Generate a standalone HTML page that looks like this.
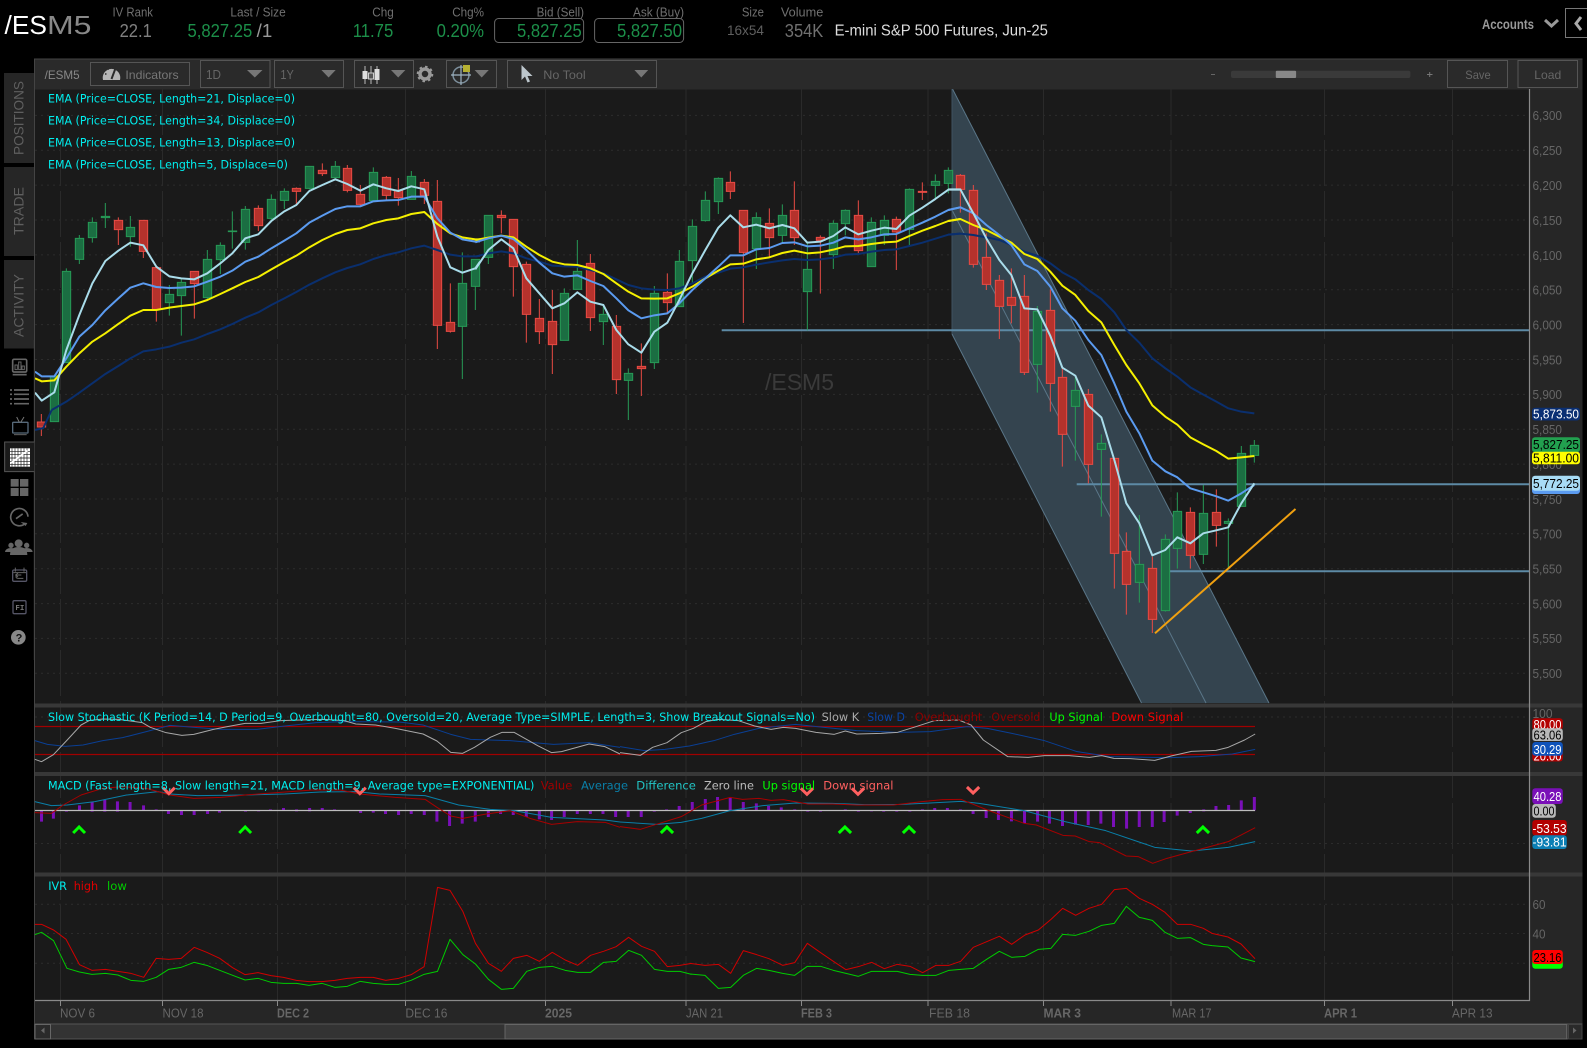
<!DOCTYPE html>
<html><head><meta charset="utf-8"><title>/ESM5</title>
<style>
html,body{margin:0;padding:0;background:#000;width:1587px;height:1048px;overflow:hidden}
svg{display:block;font-family:"Liberation Sans",sans-serif}
text{white-space:pre}
.g{fill:none;stroke:#279a56;stroke-width:3}
.gb{fill:#1b6e42;stroke:#279a56;stroke-width:3}
.r{fill:#b5322c;stroke:#e84b44;stroke-width:3}
.e5{fill:none;stroke:#a9dcea;stroke-width:6;stroke-linejoin:round}
.e13{fill:none;stroke:#5b9bf0;stroke-width:6;stroke-linejoin:round}
.e21{fill:none;stroke:#f5f000;stroke-width:6;stroke-linejoin:round}
.e34{fill:none;stroke:#0a2f6e;stroke-width:6;stroke-linejoin:round}
.n{vector-effect:non-scaling-stroke;fill:none;stroke-width:1;stroke-linejoin:round}
.ax{fill:#666;font-size:13px}
.hd{fill:#707070;font-size:13px}
.bu{font-size:13px}
.cy{fill:#0ee;font-size:11.5px}
.lg{font-family:"DejaVu Sans",sans-serif;font-size:11.5px}
.ic{fill:none;stroke:#666;stroke-width:5}
</style></head><body>
<svg width="1587" height="1048" viewBox="0 0 1587 1048" xmlns="http://www.w3.org/2000/svg">
<rect width="1587" height="1048" fill="#000"/>

<!-- header -->
<text x="4.5" y="34" font-size="26" fill="#fff" textLength="42.5" lengthAdjust="spacingAndGlyphs">/ES</text>
<text x="47" y="34" font-size="26" fill="#888" textLength="44.5" lengthAdjust="spacingAndGlyphs">M5</text>
<g class="hd">
<text x="112.5" y="16.5" textLength="40.5" lengthAdjust="spacingAndGlyphs">IV Rank</text>
<text x="230.4" y="16.5" textLength="55.3" lengthAdjust="spacingAndGlyphs">Last / Size</text>
<text x="372.3" y="16.5" textLength="21.5" lengthAdjust="spacingAndGlyphs">Chg</text>
<text x="452.2" y="16.5" textLength="31.8" lengthAdjust="spacingAndGlyphs">Chg%</text>
<text x="536.6" y="16.5" textLength="47.4" lengthAdjust="spacingAndGlyphs">Bid (Sell)</text>
<text x="633" y="16.5" textLength="51" lengthAdjust="spacingAndGlyphs">Ask (Buy)</text>
<text x="741.9" y="16.5" textLength="22" lengthAdjust="spacingAndGlyphs">Size</text>
<text x="780.9" y="16.5" textLength="42.4" lengthAdjust="spacingAndGlyphs">Volume</text>
</g>
<g font-size="18">
<text x="119.6" y="37" fill="#808080" textLength="32.2" lengthAdjust="spacingAndGlyphs">22.1</text>
<text x="187.5" y="37" fill="#1c8f49" textLength="64.7" lengthAdjust="spacingAndGlyphs">5,827.25</text>
<text x="256.7" y="37" fill="#999" textLength="15.6" lengthAdjust="spacingAndGlyphs">/1</text>
<text x="352.7" y="37" fill="#1c8f49" textLength="40.6" lengthAdjust="spacingAndGlyphs">11.75</text>
<text x="436.6" y="37" fill="#1c8f49" textLength="47.4" lengthAdjust="spacingAndGlyphs">0.20%</text>
<rect x="494.6" y="18.5" width="89" height="24" rx="4" fill="#000" stroke="#666"/>
<rect x="594.6" y="18.5" width="89" height="24" rx="4" fill="#000" stroke="#666"/>
<text x="517" y="37" fill="#1c8f49" textLength="64.7" lengthAdjust="spacingAndGlyphs">5,827.25</text>
<text x="617" y="37" fill="#1c8f49" textLength="65" lengthAdjust="spacingAndGlyphs">5,827.50</text>
<text x="784.8" y="37" fill="#707070" textLength="38.5" lengthAdjust="spacingAndGlyphs">354K</text>
</g>
<text x="727" y="35" font-size="14" fill="#5f5f5f" textLength="36.9" lengthAdjust="spacingAndGlyphs">16x54</text>
<text x="834.6" y="35.5" font-size="15.5" fill="#ddd" textLength="213.3" lengthAdjust="spacingAndGlyphs">E-mini S&amp;P 500 Futures, Jun-25</text>
<text x="1482" y="29" font-size="14" font-weight="bold" fill="#999" textLength="52" lengthAdjust="spacingAndGlyphs">Accounts</text>
<path d="M1545 20l6.5 6 6.5-6" fill="none" stroke="#999" stroke-width="3"/>
<rect x="1565.5" y="8.5" width="30" height="29" fill="#000" stroke="#777"/>
<path d="M1581 17l-5 6.500 5 6.500" fill="none" stroke="#aaa" stroke-width="3"/>

<!-- left tabs -->
<rect x="4" y="73" width="30" height="90" fill="#262626"/>
<rect x="4" y="167" width="30" height="89" fill="#262626"/>
<rect x="4" y="260" width="30" height="88.500" fill="#262626"/>
<g font-size="14" fill="#5f5f5f">
<text transform="translate(23.500,155) rotate(-90)" textLength="74" lengthAdjust="spacingAndGlyphs">POSITIONS</text>
<text transform="translate(23.500,235) rotate(-90)" textLength="48" lengthAdjust="spacingAndGlyphs">TRADE</text>
<text transform="translate(23.500,337) rotate(-90)" textLength="63" lengthAdjust="spacingAndGlyphs">ACTIVITY</text>
</g>

<!-- window -->
<rect x="34" y="58.500" width="1548.500" height="981" fill="#262626"/>
<rect x="35" y="89" width="1494" height="911" fill="#1a1a1a"/>
<rect x="34" y="59" width="1548.500" height="30.500" fill="#2a2a2a"/>
<path d="M34 59H1582.500" stroke="#444" fill="none"/>
<path d="M34.500 59V1039" stroke="#444" fill="none"/>

<!-- grid -->
<g fill="none" stroke="#2c2c2c" stroke-dasharray="2 4">
<path d="M35 115.400H1529M35 150.300H1529M35 185.100H1529M35 220H1529M35 254.900H1529M35 289.800H1529M35 324.600H1529M35 359.500H1529M35 394.400H1529M35 429.200H1529M35 464.100H1529M35 499H1529M35 533.800H1529M35 568.700H1529M35 603.600H1529M35 638.400H1529M35 673.300H1529"/>
<path d="M35 717H1529M35 843.500H1529M35 904.300H1529M35 933.500H1529M35 963.300H1529"/>
</g>
<g fill="none" stroke="#2a2a2a" stroke-dasharray="46 5">
<path d="M60.500 89V1000M162.500 89V1000M277.500 89V1000M405.500 89V1000M545.500 89V1000M686 89V1000M801.500 89V1000M928 89V1000M1043.500 89V1000M1171 89V1000M1324.500 89V1000M1452.500 89V1000"/>
</g>

<!-- main pane drawing -->
<svg x="35" y="89" width="1494" height="615" viewBox="35 89 1494 615" overflow="hidden">
<polygon points="952,88 1269,703 1141.500,703 952,334" fill="#34444f"/>
<path d="M952 88L1269 703M952 334L1141.500 703M952 210L1206 703" fill="none" stroke="#5a7688" stroke-width="1"/>
<path d="M952 88V334" fill="none" stroke="#3f5260"/>
<path d="M721.700 330.300H1529M1076.700 484.300H1529M1170 571.300H1529" fill="none" stroke="#5d8aa5" stroke-width="2"/>

<!-- z9 candles -->
<g transform="translate(30,150) scale(.33333)">
<path class="gb" d="M61 678h25V815h-25zM109 355V364M97 364h25V638h-25zM148 255V265M148 328V342M136 265h25V328h-25zM187 202V217M187 263V278M175 217h25V263h-25zM226 159V199M226 203V234M214 199h25V203h-25zM301 198V232M301 260V290M289 232h25V260h-25zM418 405V433M418 458V497M406 433h25V458h-25zM454 385V397M454 437V557M442 397h25V437h-25zM532 300V328M532 443V450M520 328h25V443h-25zM571 277V286M571 329V372M559 286h25V329h-25zM607 184V243M607 245V296M595 243h25V245h-25zM646 168V178M646 277V299M634 178h25V277h-25zM724 133V148M724 205V215M712 148h25V205h-25zM763 115V124M763 151V177M751 124h25V151h-25zM838 49V49M838 115V118M826 49h25V115h-25zM916 33V49M916 83V85M904 49h25V83h-25zM1030 52V67M1030 152V155M1018 67h25V152h-25zM1144 63V79M1144 148V149M1132 79h25V148h-25zM1297 307V400M1297 529V687M1285 400h25V529h-25zM1336 328V328M1336 409V480M1324 328h25V409h-25z"/>
<path class="r" d="M34 792V816M34 831V858M22 816h25V831h-25zM265 202V211M265 239V285M253 211h25V239h-25zM340 304V324M328 211h25V304h-25zM379 350V353M379 478V515M367 353h25V478h-25zM493 401V506M481 364h25V401h-25zM685 166V175M685 227V243M673 175h25V227h-25zM799 112V115M799 124V165M787 115h25V124h-25zM877 40V61M877 71V78M865 61h25V71h-25zM952 45V55M952 121V127M940 55h25V121h-25zM991 105V133M991 163V168M979 133h25V163h-25zM1069 78V82M1069 136V150M1057 82h25V136h-25zM1105 84V121M1105 143V167M1093 121h25V143h-25zM1183 87V97M1183 136V162M1171 97h25V136h-25zM1222 90V154M1222 526V597M1210 154h25V526h-25zM1261 400V517M1261 544V548M1249 517h25V544h-25z"/>
</g>
<!-- z10 candles -->
<g transform="translate(470,150) scale(.33333)">
<path class="gb" d="M55 322V342M43 196h25V322h-25zM283 415V430M271 430h25V571h-25zM322 270V364M310 364h25V418h-25zM400 462V493M400 515V585M388 493h25V515h-25zM475 655V670M475 691V810M463 670h25V691h-25zM553 408V430M553 638V657M541 430h25V638h-25zM628 300V334M616 334h25V470h-25zM667 208V229M667 332V400M655 229h25V332h-25zM706 124V151M706 212V215M694 151h25V212h-25zM745 82V85M745 155V192M733 85h25V155h-25zM859 187V203M859 296V357M847 203h25V296h-25zM937 163V196M937 256V280M925 196h25V256h-25zM1012 280V358M1012 425V541M1000 358h25V425h-25zM1090 211V220M1090 314V357M1078 220h25V314h-25zM1126 178V181M1126 221V256M1114 181h25V221h-25zM1204 202V217M1192 217h25V350h-25zM1243 196V211M1243 256V285M1231 211h25V256h-25zM1318 115V118M1318 238V288M1306 118h25V238h-25zM1396 73V94M1396 106V145M1384 94h25V106h-25zM1435 52V61M1435 100V130M1423 61h25V100h-25z"/>
<path class="r" d="M94 181V196M94 203V250M82 196h25V203h-25zM130 350V440M118 208h25V350h-25zM169 335V343M169 493V578M157 343h25V493h-25zM208 447V505M208 545V582M196 505h25V545h-25zM247 420V514M247 584V672M235 514h25V584h-25zM361 312V340M361 503V543M349 340h25V503h-25zM439 495V529M439 689V732M427 529h25V689h-25zM514 580V649M514 656V738M502 649h25V656h-25zM592 370V427M592 458V488M580 427h25V458h-25zM781 64V97M781 124V147M769 97h25V124h-25zM820 307V519M808 181h25V307h-25zM898 175V220M898 263V320M886 220h25V263h-25zM973 94V181M973 263V285M961 181h25V263h-25zM1051 256V262M1051 271V431M1039 262h25V271h-25zM1165 151V196M1165 302V310M1153 196h25V302h-25zM1279 200V208M1279 246V360M1267 208h25V246h-25zM1357 97V124M1357 127V150M1345 124h25V127h-25z"/>
</g>
<!-- z11 candles -->
<g transform="translate(920,150) scale(.33333)">
<path class="gb" d="M352 468V484M352 643V728M340 484h25V643h-25zM466 675V721M466 769V932M454 721h25V769h-25zM544 853V880M544 898V1100M532 880h25V898h-25zM658 1095V1243M658 1297V1358M646 1243h25V1297h-25zM736 1153V1168M736 1382V1385M724 1168h25V1382h-25zM772 1027V1084M772 1195V1256M760 1084h25V1195h-25zM850 1005V1090M850 1213V1242M838 1090h25V1213h-25zM925 1105V1114M925 1120V1254M913 1114h25V1120h-25zM964 888V910M952 910h25V1069h-25zM1003 870V886M1003 916V938M991 886h25V916h-25z"/>
<path class="r" d="M121 72V76M121 118V188M109 76h25V118h-25zM160 105V121M160 343V353M148 121h25V343h-25zM199 250V322M199 403V420M187 322h25V403h-25zM238 375V391M238 469V567M226 391h25V469h-25zM274 355V442M274 466V520M262 442h25V466h-25zM313 375V439M313 667V675M301 439h25V667h-25zM391 418V481M391 700V785M379 481h25V700h-25zM427 655V682M427 853V950M415 682h25V853h-25zM505 717V733M505 943V1000M493 733h25V943h-25zM583 1210V1316M571 925h25V1210h-25zM619 1147V1204M619 1303V1394M607 1204h25V1303h-25zM697 1220V1255M697 1408V1449M685 1255h25V1408h-25zM811 1072V1087M811 1216V1256M799 1087h25V1216h-25zM889 1018V1087M889 1126V1190M877 1087h25V1126h-25z"/>
</g>

<!-- EMAs -->
<g transform="translate(30,150) scale(.33333)">
<polyline class="e34" points="65,780 109,755 148,728 187,700 226,672 265,648 301,625 340,604 379,598 418,590 454,578 493,568 532,552 571,538 607,522 646,503 685,487 724,465 763,445 799,426 838,404 877,385 916,367 952,354 991,343 1030,327 1069,315 1105,307 1144,295 1183,287 1222,300 1261,314 1297,319 1336,319 1350,318"/>
<polyline class="e34" points="15,840 40,834 65,780"/>
<polyline class="e21" points="15,685 35,694 73,691 109,650 148,610 187,575 226,550 265,522 301,497 340,480 379,480 418,473 454,468 493,463 532,450 571,432 607,415 646,396 685,381 724,358 763,336 799,317 838,292 877,270 916,252 952,240 991,235 1030,220 1069,210 1105,205 1144,192 1183,186 1222,222 1261,250 1297,262 1336,268 1350,268"/>
<polyline class="e13" points="15,665 35,679 73,679 109,625 148,560 187,525 226,481 265,445 301,413 340,400 379,411 418,414 454,413 493,409 532,395 571,380 607,362 646,335 685,320 724,295 763,272 799,250 838,218 877,197 916,177 952,169 991,169 1030,154 1069,151 1105,150 1144,140 1183,140 1222,205 1261,248 1297,268 1336,275 1350,274"/>
<polyline class="e5" points="15,728 35,752 73,727 109,600 148,495 187,400 226,333 265,302 301,278 340,286 379,350 418,379 454,385 493,388 532,370 571,340 607,310 646,265 685,253 724,213 763,184 799,165 838,123 877,105 916,88 952,102 991,122 1030,103 1069,115 1105,123 1144,109 1183,118 1222,260 1261,352 1297,368 1336,355 1350,335"/>
</g>
<g transform="translate(470,150) scale(.33333)">
<polyline class="e34" points="16,320 55,310 94,304 130,310 169,325 208,335 247,347 283,349 322,350 361,360 400,370 439,388 475,405 514,415 553,419 592,420 628,415 667,400 706,380 745,368 781,356 820,352 859,344 898,337 937,331 973,327 1012,330 1051,328 1090,323 1126,314 1165,312 1204,305 1243,300 1279,298 1318,288 1357,278 1396,266 1435,254 1471,251"/>
<polyline class="e21" points="16,270 55,263 94,257 130,262 169,290 208,315 247,335 283,343 322,345 361,355 400,372 439,400 475,425 514,445 553,446 592,445 628,430 667,410 706,385 745,362 781,343 820,341 859,328 898,322 937,309 973,302 1012,310 1051,307 1090,299 1126,289 1165,288 1204,282 1243,277 1279,275 1318,258 1357,242 1396,228 1435,213 1471,207"/>
<polyline class="e13" points="16,277 55,265 94,257 130,267 169,300 208,338 247,370 283,380 322,376 361,393 400,408 439,445 475,481 514,505 553,496 592,490 628,460 667,420 706,385 745,350 781,316 820,316 859,298 898,294 937,279 973,277 1012,289 1051,287 1090,278 1126,262 1165,268 1204,262 1243,253 1279,252 1318,235 1357,218 1396,200 1435,180 1471,172"/>
<polyline class="e5" points="16,358 55,300 94,268 130,295 169,385 208,430 247,475 283,460 322,427 361,455 400,465 439,540 475,583 514,608 553,545 592,518 628,450 667,370 706,300 745,233 781,196 820,232 859,224 898,235 937,225 973,235 1012,278 1051,275 1090,258 1126,232 1165,253 1204,242 1243,233 1279,237 1318,197 1357,173 1396,147 1435,119 1471,119"/>
</g>
<g transform="translate(920,150) scale(.33333)">
<polyline class="e34" points="85,254 121,251 160,255 199,262 238,270 274,285 313,305 352,317 391,340 427,367 466,388 505,420 544,447 583,487 619,540 658,578 697,625 736,655 772,680 811,712 850,734 889,755 925,775 964,785 1003,790"/>
<polyline class="e21" points="85,213 121,207 160,225 199,240 238,260 274,278 313,312 352,327 391,365 427,407 466,435 505,483 544,517 583,585 619,645 658,700 697,766 736,800 772,824 811,862 850,883 889,903 925,926 964,922 1003,918"/>
<polyline class="e13" points="85,180 121,172 160,190 199,225 238,255 274,285 313,343 352,363 391,410 427,475 466,512 505,570 544,615 583,700 619,785 658,850 697,932 736,964 772,982 811,1015 850,1027 889,1039 925,1052 964,1030 1003,1005"/>
<polyline class="e5" points="85,118 121,118 160,190 199,265 238,330 274,375 313,475 352,478 391,558 427,653 466,677 505,767 544,802 583,930 619,1060 658,1120 697,1216 736,1200 772,1162 811,1180 850,1150 889,1141 925,1132 964,1060 1003,1000"/>
</g>
<path d="M1155 633.300L1295.500 509" fill="none" stroke="#f0a010" stroke-width="2"/>
<text x="765" y="390" font-size="23" fill="#3a3a3a" textLength="69" lengthAdjust="spacingAndGlyphs">/ESM5</text>
</svg>

<!-- EMA legends -->
<g class="lg" fill="#0ee">
<text x="48" y="102.500" textLength="247" lengthAdjust="spacingAndGlyphs">EMA (Price=CLOSE, Length=21, Displace=0)</text>
<text x="48" y="124.500" textLength="247" lengthAdjust="spacingAndGlyphs">EMA (Price=CLOSE, Length=34, Displace=0)</text>
<text x="48" y="146.500" textLength="247" lengthAdjust="spacingAndGlyphs">EMA (Price=CLOSE, Length=13, Displace=0)</text>
<text x="48" y="168.500" textLength="240" lengthAdjust="spacingAndGlyphs">EMA (Price=CLOSE, Length=5, Displace=0)</text>
</g>

<!-- pane separators -->
<g fill="#383838">
<rect x="35" y="703.500" width="1547.500" height="4"/>
<rect x="35" y="772" width="1547.500" height="4"/>
<rect x="35" y="872.500" width="1547.500" height="4"/>
</g>

<!-- stoch -->
<path d="M35 726.500H1255M35 754.500H1255" stroke="#a00000" fill="none" stroke-width="1.200"/>
<g transform="translate(0,690) scale(.3954,.33333)">
<polyline class="n" stroke="#0a3f94" points="88,152 120,163 165,169 210,165 260,152 310,143 370,125 430,106 500,113 560,118 650,118 720,108 800,98 870,95 1010,96 1070,105 1140,133 1190,148 1290,152 1400,163 1490,158 1568,172"/>
<polyline class="n" stroke="#a8a8a8" points="88,208 105,215 135,194 170,150 205,105 225,92 260,87 300,88 360,98 380,112 420,128 460,136 490,133 540,118 575,110 620,100 660,100 710,92 760,90 820,88 870,92 900,102 950,105 1000,115 1070,132 1105,153 1140,187 1170,190 1200,172 1240,142 1270,127 1300,127 1360,167 1395,188 1420,185 1490,162 1530,170 1568,192"/>
</g>
<g transform="translate(620,690) scale(.4082,.33333)">
<polyline class="n" stroke="#0a3f94" points="0,170 60,182 110,178 170,168 230,152 280,133 340,115 430,103 500,112 580,122 680,127 760,125 850,110 900,115 960,130 1040,152 1120,185 1200,200 1350,203 1420,200 1500,192 1556,178"/>
<polyline class="n" stroke="#a8a8a8" points="0,188 50,196 80,172 115,158 150,128 180,115 210,95 240,88 290,92 330,108 370,118 400,112 430,115 480,127 525,133 552,123 580,132 640,130 680,127 720,112 770,92 830,90 860,105 890,150 950,200 1000,202 1040,197 1100,197 1150,202 1180,197 1210,205 1250,206 1310,211 1350,198 1400,184 1460,181 1490,172 1530,150 1556,132"/>
</g>
<g class="lg">
<text x="48" y="721" fill="#0ee" textLength="767" lengthAdjust="spacingAndGlyphs">Slow Stochastic (K Period=14, D Period=9, Overbought=80, Oversold=20, Average Type=SIMPLE, Length=3, Show Breakout Signals=No)</text>
<text x="821.600" y="721" fill="#aaa" textLength="37.600" lengthAdjust="spacingAndGlyphs">Slow K</text>
<text x="867.300" y="721" fill="#0a45a8" textLength="37.600" lengthAdjust="spacingAndGlyphs">Slow D</text>
<text x="914.700" y="721" fill="#8f0000" textLength="67.700" lengthAdjust="spacingAndGlyphs">Overbought</text>
<text x="991.400" y="721" fill="#8f0000" textLength="49" lengthAdjust="spacingAndGlyphs">Oversold</text>
<text x="1049.400" y="721" fill="#0f0" textLength="53.500" lengthAdjust="spacingAndGlyphs">Up Signal</text>
<text x="1111.400" y="721" fill="#f00" textLength="71.900" lengthAdjust="spacingAndGlyphs">Down Signal</text>
</g>

<!-- macd -->
<g transform="translate(0,690) scale(.3954,.33333)">
<path d="M105 361V395M135 361V386M168 361V365M201 346V361M233 335V365M265 330V365M297 334V365M329 336V363M363 346V363M395 358V362M426 361V372M459 361V375M491 361V375M525 361V372M555 361V368M588 361V363M621 361V365M654 361V364M684 358V361M717 354V361M750 358V364M783 354V364M815 354V361M846 358V362M879 361V363M912 361V369M944 361V368M975 361V372M1008 361V375M1040 361V372M1073 361V375M1105 361V395M1137 361V408M1169 361V401M1202 361V395M1235 361V381M1266 361V372M1298 361V375M1331 361V381M1364 361V388M1395 361V390M1427 361V381M1460 361V372M1493 361V372M1525 361V372M1557 361V381" fill="none" stroke="#7a0fb8" stroke-width="3" style="vector-effect:non-scaling-stroke"/>
</g>
<g transform="translate(620,690) scale(.4082,.33333)">
<path d="M20 361V381M52 361V381M84 361V365M114 358V362M145 348V362M177 336V362M209 327V362M239 321V362M270 324V362M302 336V362M334 340V362M364 348V362M395 352V362M428 358V362M460 361V365M491 361V365M521 361V363M552 358V362M584 361V365M616 361V364M646 361V365M678 361V365M710 361V365M741 358V362M771 354V361M802 354V362M834 358V362M865 361V372M897 361V384M927 361V390M959 361V394M991 361V400M1023 361V395M1052 361V401M1084 361V408M1116 361V404M1147 361V405M1178 361V401M1209 361V411M1241 361V416M1272 361V411M1304 361V411M1333 361V396M1365 361V377M1397 361V369M1430 358V364M1460 348V362M1491 345V361M1522 331V362M1554 321V361" fill="none" stroke="#7a0fb8" stroke-width="3" style="vector-effect:non-scaling-stroke"/>
</g>
<path d="M35 810.500H1255" stroke="#bdbdbd" fill="none" stroke-width="1.200"/>
<g transform="translate(0,690) scale(.3954,.33333)">
<polyline class="n" stroke="#0a7fa8" points="88,335 130,347 170,345 240,335 320,315 400,305 430,312 500,317 620,315 720,312 810,306 900,305 960,312 1075,317 1160,345 1240,358 1300,362 1395,382 1530,390 1568,396"/>
<polyline class="n" stroke="#a80000" points="88,368 130,370 160,345 205,315 260,295 310,290 370,295 430,315 490,325 560,322 620,315 700,308 790,300 860,300 910,312 1000,322 1075,328 1105,352 1140,378 1170,385 1230,372 1290,362 1340,385 1395,403 1460,395 1530,397 1568,412"/>
<path d="M185 429L200 411L215 429M605 429L620 411L635 429" fill="none" stroke="#0f0" stroke-width="3" style="vector-effect:non-scaling-stroke"/>
<path d="M412 293L427 311L442 293M895 293L910 311L925 293" fill="none" stroke="#ff6060" stroke-width="3" style="vector-effect:non-scaling-stroke"/>
</g>
<g transform="translate(620,690) scale(.4082,.33333)">
<polyline class="n" stroke="#0a7fa8" points="0,396 90,403 150,397 200,385 270,362 350,347 430,339 520,340 600,344 690,343 760,339 835,334 880,340 990,362 1090,395 1190,422 1310,472 1400,483 1490,472 1556,455"/>
<polyline class="n" stroke="#a80000" points="0,410 50,418 110,395 150,380 200,345 270,322 300,328 340,325 370,331 400,329 460,342 520,342 580,345 670,345 740,335 790,329 835,328 900,360 990,400 1020,405 1085,436 1115,438 1150,455 1175,458 1240,498 1270,500 1305,520 1340,505 1400,485 1490,455 1556,413"/>
<path d="M100 429L115 411L130 429M536 429L551 411L566 429M693 429L708 411L723 429M1413 429L1428 411L1443 429" fill="none" stroke="#0f0" stroke-width="3" style="vector-effect:non-scaling-stroke"/>
<path d="M443 295L458 313L473 295M568 295L583 313L598 295M850 291L865 309L880 291" fill="none" stroke="#ff6060" stroke-width="3" style="vector-effect:non-scaling-stroke"/>
</g>
<g class="lg">
<text x="48" y="789.500" fill="#0ee" textLength="486.400" lengthAdjust="spacingAndGlyphs">MACD (Fast length=8, Slow length=21, MACD length=9, Average type=EXPONENTIAL)</text>
<text x="540.700" y="789.500" fill="#a00000" textLength="31.600" lengthAdjust="spacingAndGlyphs">Value</text>
<text x="581" y="789.500" fill="#0a7fa8" textLength="47" lengthAdjust="spacingAndGlyphs">Average</text>
<text x="636.300" y="789.500" fill="#22c4c4" textLength="59.600" lengthAdjust="spacingAndGlyphs">Difference</text>
<text x="704" y="789.500" fill="#bbb" textLength="49.900" lengthAdjust="spacingAndGlyphs">Zero line</text>
<text x="762.400" y="789.500" fill="#0f0" textLength="52.700" lengthAdjust="spacingAndGlyphs">Up signal</text>
<text x="823.300" y="789.500" fill="#ff6060" textLength="70.200" lengthAdjust="spacingAndGlyphs">Down signal</text>
</g>

<!-- IVR -->
<g transform="translate(0,860) scale(.44643,.33333)">
<polyline class="n" stroke="#d00000" points="78,193 93,193 120,210 148,238 178,314 206,331 236,328 264,334 293,340 322,352 350,295 378,298 406,295 435,262 463,277 492,295 521,323 549,344 578,338 607,347 635,352 664,361 692,365 721,365 750,361 778,355 807,352 836,352 864,361 893,355 921,344 950,320 980,82 1008,91 1037,155 1065,250 1094,310 1123,334 1150,295 1180,286 1208,304 1237,277 1266,300 1294,316 1323,286 1352,274 1380,260 1408,232 1437,259 1466,274 1495,320 1523,316 1549,310"/>
<polyline class="n" stroke="#00cc00" points="78,224 93,217 120,242 150,325 178,336 206,343 236,340 264,345 293,361 322,364 350,352 378,328 406,322 435,307 463,316 492,331 521,346 549,360 578,355 607,367 635,370 664,370 692,376 721,370 750,382 778,379 807,364 836,370 864,373 893,373 921,361 950,343 980,334 1008,238 1037,284 1065,312 1094,358 1123,388 1150,385 1180,334 1208,322 1237,319 1266,331 1294,337 1323,337 1352,307 1380,304 1408,271 1437,286 1466,328 1495,334 1523,334 1549,343"/>
</g>
<g transform="translate(690,876) scale(.33333)">
<polyline class="n" stroke="#d00000" points="0,262 45,268 85,265 122,292 160,224 200,236 237,248 278,268 314,260 352,202 392,230 430,256 468,281 505,272 545,259 583,278 622,265 660,271 698,290 738,268 777,268 812,256 850,214 890,197 928,181 965,205 1005,177 1045,162 1083,130 1118,97 1157,118 1197,97 1235,85 1273,41 1309,37 1348,67 1387,85 1425,109 1462,145 1502,145 1540,157 1566,172 1614,183 1653,204 1695,248"/>
<polyline class="n" stroke="#00cc00" points="0,294 45,298 85,337 122,334 160,298 200,277 237,283 278,292 314,298 352,271 392,271 430,283 468,292 505,301 545,286 583,286 622,286 660,295 698,298 738,298 777,283 812,280 850,277 890,250 928,226 965,244 1005,241 1045,220 1083,217 1118,175 1157,178 1197,166 1235,148 1273,142 1309,91 1348,124 1387,133 1425,169 1462,187 1502,185 1540,205 1566,209 1614,213 1653,246 1695,257"/>
</g>
<g class="lg">
<text x="48.200" y="890" fill="#0ee" textLength="18.800" lengthAdjust="spacingAndGlyphs">IVR</text>
<text x="73.700" y="890" fill="#e00000" textLength="24.500" lengthAdjust="spacingAndGlyphs">high</text>
<text x="107" y="890" fill="#0c0" textLength="19.800" lengthAdjust="spacingAndGlyphs">low</text>
</g>

<!-- axes -->
<path d="M1529.500 89V1000.500H35" fill="none" stroke="#8a8a8a" stroke-width="1.200"/>
<path d="M60.500 1000V1006M162.500 1000V1006M277.500 1000V1006M405.500 1000V1006M545.500 1000V1006M686 1000V1006M801.500 1000V1006M928 1000V1006M1043.500 1000V1006M1171 1000V1006M1324.500 1000V1006M1452.500 1000V1006" stroke="#8a8a8a" fill="none"/>
<g class="ax">
<text x="1532.500" y="120" textLength="29.500" lengthAdjust="spacingAndGlyphs">6,300</text>
<text x="1532.500" y="155" textLength="29.500" lengthAdjust="spacingAndGlyphs">6,250</text>
<text x="1532.500" y="190" textLength="29.500" lengthAdjust="spacingAndGlyphs">6,200</text>
<text x="1532.500" y="225" textLength="29.500" lengthAdjust="spacingAndGlyphs">6,150</text>
<text x="1532.500" y="260" textLength="29.500" lengthAdjust="spacingAndGlyphs">6,100</text>
<text x="1532.500" y="294.500" textLength="29.500" lengthAdjust="spacingAndGlyphs">6,050</text>
<text x="1532.500" y="329.500" textLength="29.500" lengthAdjust="spacingAndGlyphs">6,000</text>
<text x="1532.500" y="364.500" textLength="29.500" lengthAdjust="spacingAndGlyphs">5,950</text>
<text x="1532.500" y="399" textLength="29.500" lengthAdjust="spacingAndGlyphs">5,900</text>
<text x="1532.500" y="434" textLength="29.500" lengthAdjust="spacingAndGlyphs">5,850</text>
<text x="1532.500" y="469" textLength="29.500" lengthAdjust="spacingAndGlyphs">5,800</text>
<text x="1532.500" y="504" textLength="29.500" lengthAdjust="spacingAndGlyphs">5,750</text>
<text x="1532.500" y="538.500" textLength="29.500" lengthAdjust="spacingAndGlyphs">5,700</text>
<text x="1532.500" y="573.500" textLength="29.500" lengthAdjust="spacingAndGlyphs">5,650</text>
<text x="1532.500" y="608.500" textLength="29.500" lengthAdjust="spacingAndGlyphs">5,600</text>
<text x="1532.500" y="643" textLength="29.500" lengthAdjust="spacingAndGlyphs">5,550</text>
<text x="1532.500" y="678" textLength="29.500" lengthAdjust="spacingAndGlyphs">5,500</text>
<text x="1532.500" y="718" textLength="20" lengthAdjust="spacingAndGlyphs">100</text>
<text x="1532.500" y="909" textLength="13" lengthAdjust="spacingAndGlyphs">60</text>
<text x="1532.500" y="938.500" textLength="13" lengthAdjust="spacingAndGlyphs">40</text>
</g>
<!-- bubbles -->
<g class="bu">
<rect x="1532" y="407.700" width="48" height="12.800" rx="3" fill="#0a2f73"/>
<text x="1533" y="418.500" fill="#fff" textLength="46" lengthAdjust="spacingAndGlyphs">5,873.50</text>
<rect x="1532" y="437.300" width="48" height="15" rx="3" fill="#22a04f"/>
<text x="1533" y="449" fill="#000" textLength="46" lengthAdjust="spacingAndGlyphs">5,827.25</text>
<rect x="1532" y="451.700" width="48" height="12.500" rx="3" fill="#ff0"/>
<text x="1533" y="462.500" fill="#000" textLength="46" lengthAdjust="spacingAndGlyphs">5,811.00</text>
<rect x="1532" y="480" width="48" height="14" rx="3" fill="#5b9bf0"/>
<rect x="1532" y="475.700" width="48" height="15" rx="3" fill="#a8dcf5"/>
<text x="1533" y="488" fill="#000" textLength="46" lengthAdjust="spacingAndGlyphs">5,772.25</text>

<rect x="1532.300" y="718.300" width="30.500" height="11.500" rx="3" fill="#b30000"/>
<text x="1533.500" y="729" fill="#fff" textLength="28" lengthAdjust="spacingAndGlyphs">80.00</text>
<rect x="1532.300" y="750" width="30.500" height="11.500" rx="3" fill="#b30000"/>
<text x="1533.500" y="760.500" fill="#fff" textLength="28" lengthAdjust="spacingAndGlyphs">20.00</text>
<rect x="1532.300" y="728.300" width="30.500" height="12.700" rx="3" fill="#b8b8b8"/>
<text x="1533.500" y="739.500" fill="#000" textLength="28" lengthAdjust="spacingAndGlyphs">63.06</text>
<rect x="1532.300" y="742" width="30.500" height="13.700" rx="3" fill="#0f52ba"/>
<text x="1533.500" y="754" fill="#fff" textLength="28" lengthAdjust="spacingAndGlyphs">30.29</text>

<rect x="1532.300" y="788.300" width="30.500" height="15.700" rx="3" fill="#7a0fb8"/>
<text x="1533.500" y="801" fill="#fff" textLength="28" lengthAdjust="spacingAndGlyphs">40.28</text>
<rect x="1532.300" y="804" width="23.500" height="13.700" rx="3" fill="#b8b8b8"/>
<text x="1533.500" y="815.500" fill="#000" textLength="21" lengthAdjust="spacingAndGlyphs">0.00</text>
<rect x="1532.300" y="820" width="34.500" height="15.500" rx="3" fill="#b30000"/>
<text x="1532.500" y="833" fill="#fff" textLength="34" lengthAdjust="spacingAndGlyphs">-53.53</text>
<rect x="1532.300" y="835.300" width="34.500" height="13.700" rx="3" fill="#0b7fb5"/>
<text x="1532.500" y="846.500" fill="#fff" textLength="34" lengthAdjust="spacingAndGlyphs">-93.81</text>

<rect x="1532.300" y="955" width="30.500" height="13.700" rx="3" fill="#0f0"/>
<rect x="1532.300" y="950" width="30.500" height="14" rx="3" fill="#f00"/>
<text x="1533.500" y="962" fill="#000" textLength="28" lengthAdjust="spacingAndGlyphs">23.16</text>
</g>

<!-- dates -->
<g class="ax">
<text x="60" y="1017.500" textLength="35" lengthAdjust="spacingAndGlyphs">NOV 6</text>
<text x="162.500" y="1017.500" textLength="41" lengthAdjust="spacingAndGlyphs">NOV 18</text>
<text x="277" y="1017.500" font-weight="bold" textLength="32" lengthAdjust="spacingAndGlyphs">DEC 2</text>
<text x="405.400" y="1017.500" textLength="42" lengthAdjust="spacingAndGlyphs">DEC 16</text>
<text x="545" y="1017.500" font-weight="bold" textLength="27" lengthAdjust="spacingAndGlyphs">2025</text>
<text x="686" y="1017.500" textLength="37" lengthAdjust="spacingAndGlyphs">JAN 21</text>
<text x="801" y="1017.500" font-weight="bold" textLength="31" lengthAdjust="spacingAndGlyphs">FEB 3</text>
<text x="929" y="1017.500" textLength="41" lengthAdjust="spacingAndGlyphs">FEB 18</text>
<text x="1043.500" y="1017.500" font-weight="bold" textLength="37.500" lengthAdjust="spacingAndGlyphs">MAR 3</text>
<text x="1172" y="1017.500" textLength="39.500" lengthAdjust="spacingAndGlyphs">MAR 17</text>
<text x="1324" y="1017.500" font-weight="bold" textLength="33" lengthAdjust="spacingAndGlyphs">APR 1</text>
<text x="1452" y="1017.500" textLength="40.500" lengthAdjust="spacingAndGlyphs">APR 13</text>
</g>

<!-- scrollbar -->
<rect x="35" y="1024" width="1547.500" height="15.300" fill="#333"/>
<path d="M35 1024H1582.500" stroke="#555" fill="none"/>
<path d="M35 1039H1582.500" stroke="#555" fill="none"/>
<rect x="505" y="1024.500" width="1061.700" height="14.500" fill="#444" stroke="#666"/>
<rect x="35" y="1024.500" width="15.500" height="14.500" fill="#2a2a2a" stroke="#666"/>
<rect x="1568.500" y="1024.500" width="13.500" height="14.500" fill="#2a2a2a" stroke="#444"/>
<path d="M44.500 1027.500v6l-3.500-3zM1573 1027.500v6l3.500-3z" fill="#666"/>

<!-- toolbar -->
<text x="44.600" y="79" font-size="12" fill="#888" textLength="35" lengthAdjust="spacingAndGlyphs">/ESM5</text>
<g fill="#2a2a2a" stroke="#555">
<rect x="90.500" y="62.500" width="99" height="23"/>
<rect x="200.500" y="60.500" width="69.500" height="27"/>
<rect x="274.500" y="60.500" width="69" height="27"/>
<rect x="354.500" y="60.500" width="59" height="27"/>
<rect x="446.500" y="60.500" width="50" height="27"/>
<rect x="507.500" y="60.500" width="149" height="27"/>
<rect x="1447.500" y="60.500" width="60" height="27"/>
<rect x="1518" y="60.500" width="59.500" height="27"/>
</g>
<path d="M103 80a8.800 8.800 0 1 1 17 0z" fill="#b5b5b5"/>
<path d="M111.500 79L116 67" stroke="#2a2a2a" stroke-width="2" fill="none"/>
<path d="M105 74h1.500M108 69h1M115 69h1" stroke="#2a2a2a" stroke-width="1.500" fill="none"/>
<text x="125.400" y="79" font-size="12" fill="#777" textLength="53.200" lengthAdjust="spacingAndGlyphs">Indicators</text>
<g font-size="13" fill="#666">
<text x="206" y="79" textLength="15" lengthAdjust="spacingAndGlyphs">1D</text>
<text x="280.400" y="79" textLength="13.400" lengthAdjust="spacingAndGlyphs">1Y</text>
<text x="543.300" y="79" font-size="12" textLength="42.400" lengthAdjust="spacingAndGlyphs">No Tool</text>
<text x="1465.300" y="79" font-size="12" textLength="25.400" lengthAdjust="spacingAndGlyphs">Save</text>
<text x="1534.300" y="79" font-size="12" textLength="27" lengthAdjust="spacingAndGlyphs">Load</text>
</g>
<g fill="#777">
<path d="M247 70h15.500l-7.700 7.500zM321.400 70h14.300l-7.100 7.500zM391 70h14.400l-7.200 7.500zM474.600 70h14.200l-7.100 7.500zM634.400 70h13.800l-6.900 7.500z"/>
</g>
<path d="M365 66v18M371 66v18M377 66v18" stroke="#bbb" fill="none"/>
<rect x="362.500" y="71" width="5" height="8" fill="#ddd"/>
<rect x="368.500" y="73" width="5" height="6" fill="#555" stroke="#ccc"/>
<rect x="374.500" y="69" width="5" height="11" fill="#ddd"/>
<circle cx="425" cy="74" r="5" fill="none" stroke="#999" stroke-width="3.500"/>
<circle cx="425" cy="74" r="7.300" fill="none" stroke="#999" stroke-width="2" stroke-dasharray="2.500 3.200"/>
<circle cx="461" cy="75" r="8" fill="none" stroke="#7d8f9c" stroke-width="1.500"/>
<path d="M451 75h20M461 65v20" stroke="#9fb4c2" fill="none" stroke-width="1.200"/>
<rect x="463" y="65" width="7" height="7" fill="#b5b032"/>
<path d="M521.500 65v15l3.500-3.500 2.500 6 2.500-1-2.500-5.500h5z" fill="#bcc6cc"/>
<path d="M1211 74.500h4" stroke="#666" fill="none"/>
<rect x="1231" y="70.700" width="179.400" height="7.300" rx="2" fill="#3a3a3a"/>
<rect x="1275.800" y="70.700" width="20.300" height="7.300" rx="1" fill="#888"/>
<path d="M1427 74.500h5.500M1429.700 72v5" stroke="#777" fill="none"/>

<!-- left icons -->
<g transform="scale(.33333) translate(0,1020)">
<rect x="12" y="306" width="91" height="89" fill="#1a1a1a"/>
<path d="M103 306H14V395H103" fill="none" stroke="#555" stroke-width="3"/>
<path d="M103 0V306M103 395V960" stroke="#444" stroke-width="3" fill="none"/>
<rect class="ic" x="38" y="58" width="42" height="38" rx="4"/>
<path class="ic" d="M38 104h42" stroke-width="6"/>
<path d="M45 75h7v14h-7zM56 66h7v23h-7zM66 78h7v11h-7z" fill="none" stroke="#666" stroke-width="3"/>
<path d="M30 150h6M42 150h45M30 163h6M42 163h45M30 177h6M42 177h45M30 191h6M42 191h45" fill="none" stroke="#666" stroke-width="5"/>
<rect x="38" y="247" width="46" height="32" rx="2" fill="none" stroke="#56697a" stroke-width="4"/>
<path d="M58 247L50 231M62 247L72 231" fill="none" stroke="#777" stroke-width="3"/>
<path d="M42 284h38" stroke="#666" stroke-width="3" fill="none"/>
<rect x="30" y="325" width="60" height="55" fill="#fff"/>
<path d="M36 325V380M45 325V380M54 325V380M63 325V380M72 325V380M81 325V380M30 334H90M30 344H90M30 354H90M30 364H90M30 373H90" stroke="#1a1a1a" stroke-width="2" fill="none"/>
<path d="M34 368L58 350L82 332" stroke="#fff" stroke-width="5" fill="none"/>
<path d="M32 417h24v23h-24zM60 417h25v23h-25zM32 444h24v24h-24zM60 444h25v24h-25z" fill="#666"/>
<path d="M74 552A26 26 0 1 1 84 530" fill="none" stroke="#666" stroke-width="5"/>
<path d="M62 546l20 3-5 9z" fill="#666"/>
<path d="M48 536L68 522" stroke="#666" stroke-width="5" fill="none"/>
<circle cx="56" cy="610" r="12" fill="#666"/>
<circle cx="33" cy="616" r="8" fill="#666"/>
<circle cx="80" cy="616" r="8" fill="#666"/>
<path d="M30 645q0-24 26-24t26 24zM15 636q2-12 18-12t18 12zM62 636q2-12 18-12t18 12z" fill="#666"/>
<rect x="38" y="690" width="42" height="34" rx="4" fill="none" stroke="#556" stroke-width="4"/>
<path d="M46 683v12M72 683v12M40 698h38" stroke="#666" stroke-width="3" fill="none"/>
<path d="M70 715h-16q-6 0-6-5t6-5h10M54 699l-7 6 7 6" stroke="#666" stroke-width="3" fill="none"/>
<rect x="39" y="782" width="39" height="39" rx="4" fill="none" stroke="#556" stroke-width="4"/>
<text x="46" y="810" font-size="23" font-weight="bold" fill="#777" font-family="Liberation Mono,monospace" textLength="27" lengthAdjust="spacingAndGlyphs">FI</text>
<circle cx="55" cy="892" r="22" fill="#888"/>
<text x="47" y="904" font-size="33" font-weight="bold" fill="#111">?</text>
</g>
</svg>
</body></html>
